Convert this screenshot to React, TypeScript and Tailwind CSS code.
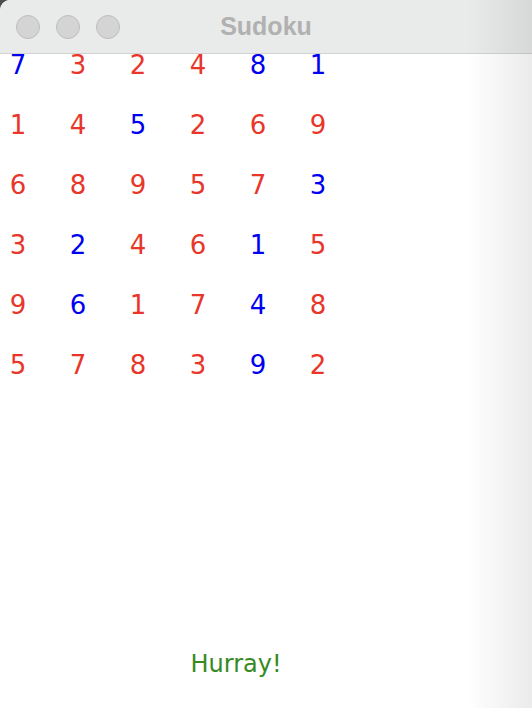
const board: { v: number; blue: boolean }[][] = [
  [
    { v: 7, blue: true },
    { v: 3, blue: false },
    { v: 2, blue: false },
    { v: 4, blue: false },
    { v: 8, blue: true },
    { v: 1, blue: true },
  ],
  [
    { v: 1, blue: false },
    { v: 4, blue: false },
    { v: 5, blue: true },
    { v: 2, blue: false },
    { v: 6, blue: false },
    { v: 9, blue: false },
  ],
  [
    { v: 6, blue: false },
    { v: 8, blue: false },
    { v: 9, blue: false },
    { v: 5, blue: false },
    { v: 7, blue: false },
    { v: 3, blue: true },
  ],
  [
    { v: 3, blue: false },
    { v: 2, blue: true },
    { v: 4, blue: false },
    { v: 6, blue: false },
    { v: 1, blue: true },
    { v: 5, blue: false },
  ],
  [
    { v: 9, blue: false },
    { v: 6, blue: true },
    { v: 1, blue: false },
    { v: 7, blue: false },
    { v: 4, blue: true },
    { v: 8, blue: false },
  ],
  [
    { v: 5, blue: false },
    { v: 7, blue: false },
    { v: 8, blue: false },
    { v: 3, blue: false },
    { v: 9, blue: true },
    { v: 2, blue: false },
  ],
]

function TitleBar() {
  return (
    <div className="relative flex h-[54px] shrink-0 items-center border-b border-[#d2d2d2] bg-[#e9eaea]">
      <div className="flex gap-[16px] pl-[16px] pt-[1px]">
        {[0, 1, 2].map((i) => (
          <span
            key={i}
            className="h-[24px] w-[24px] rounded-full border border-[#bdbdbd] bg-[#d4d4d4]"
          />
        ))}
      </div>
      <div className="absolute inset-x-0 top-0 flex h-[53px] items-center justify-center">
        <span className="font-['Liberation_Sans',Arial,sans-serif] text-[25px] font-bold text-[#b1b1b1]">
          Sudoku
        </span>
      </div>
    </div>
  )
}

export default function App() {
  return (
    <div className="h-[708px] w-[532px] overflow-hidden bg-[#4b4b50]">
      <div className="relative flex h-full flex-col overflow-hidden rounded-tl-[10px] bg-white font-['DejaVu_Sans',sans-serif]">
        <TitleBar />
        <div className="flex flex-1 flex-col overflow-hidden">
          <div className="-mt-[19px] flex flex-col">
            {board.map((row, r) => (
              <div key={r} className="flex h-[60px] gap-[24px]">
                {row.map((cell, c) => (
                  <span
                    key={c}
                    className={
                      'w-[36px] text-center text-[26px] leading-[60px] ' +
                      (cell.blue ? 'text-[#0000f0]' : 'text-[#e8362b]')
                    }
                  >
                    {cell.v}
                  </span>
                ))}
              </div>
            ))}
          </div>
          <div className="flex-1" />
          <div className="w-[472px] pb-[28px] text-center text-[24px] leading-[32px] text-[#378a23]">
            Hurray!
          </div>
        </div>
        <div className="pointer-events-none absolute inset-y-0 right-0 w-[64px] bg-gradient-to-r from-transparent to-black/[0.08]" />
      </div>
    </div>
  )
}
